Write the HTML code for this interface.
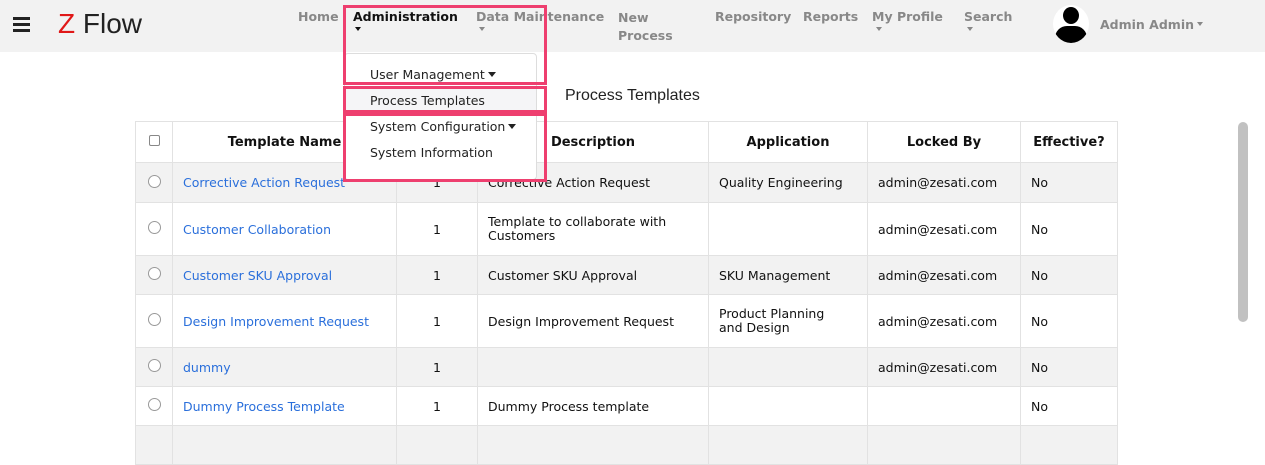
<!DOCTYPE html>
<html><head><style>
*{box-sizing:border-box;margin:0;padding:0}
body{width:1265px;height:429px;overflow:hidden;background:#fff;font-family:"DejaVu Sans","Liberation Sans",sans-serif;position:relative;color:#111}
.hdr{position:absolute;left:0;top:0;width:1265px;height:52px;background:#f2f2f2}
.nav{position:absolute;font-size:12.5px;font-weight:bold;color:#888;top:9px}
.car{position:absolute;width:0;height:0;border-left:3px solid transparent;border-right:3px solid transparent;border-top:4px solid #888}
table{position:absolute;left:135px;top:121px;border-collapse:collapse;font-size:12.5px}
td,th{border:1px solid #e2e2e2;padding:0 10px;vertical-align:middle}
th{font-weight:bold;font-size:13px;text-align:center;height:41px}
tr.s td{background:#f2f2f2}
a{color:#2a6fdb;text-decoration:none}
.rad{display:inline-block;width:13px;height:13px;border:1px solid #999;border-radius:50%;background:#fff}
.pink{position:absolute;border:3px solid #ee3f6f}
.dd{position:absolute;left:344px;top:53px;width:193px;height:127px;background:#fff;border:1px solid #ddd;border-radius:4px}
.di{position:absolute;left:370px;font-size:12.5px;color:#222}
</style></head><body>
<div class="hdr">
<div style="position:absolute;left:13px;top:17px;width:17px;height:3px;background:#222;box-shadow:0 6px 0 #222,0 12px 0 #222"></div>
<div style="position:absolute;left:58px;top:8px;font-family:'Liberation Sans',sans-serif;font-size:28px;color:#222"><span style="color:#e01818">Z</span> Flow</div>
<div class="nav" style="left:298px">Home</div>
<div class="nav" style="left:353px;color:#111">Administration</div><div class="car" style="left:355px;top:27px;border-top-color:#111"></div>
<div class="nav" style="left:476px">Data Maintenance</div><div class="car" style="left:479px;top:27px"></div>
<div class="nav" style="left:618px;line-height:18px">New<br>Process</div>
<div class="nav" style="left:715px">Repository</div>
<div class="nav" style="left:803px">Reports</div>
<div class="nav" style="left:872px">My Profile</div><div class="car" style="left:876px;top:27px"></div>
<div class="nav" style="left:964px">Search</div><div class="car" style="left:967px;top:27px"></div>
<div style="position:absolute;left:1053px;top:5px;width:36px;height:38px;border-radius:50%;background:#fff;overflow:hidden">
<div style="position:absolute;left:10px;top:2px;width:16px;height:17px;border-radius:50%;background:#000"></div>
<div style="position:absolute;left:2px;top:21px;width:32px;height:20px;border-radius:12px 12px 8px 8px;background:#000"></div></div>
<div class="nav" style="left:1100px;top:17px">Admin Admin</div><div class="car" style="left:1197px;top:22px"></div>
</div>
<div style="position:absolute;left:565px;top:87px;font-family:'Liberation Sans',sans-serif;font-size:16px;color:#222">Process Templates</div>
<table>
<tr><th style="width:37px"><span style="display:inline-block;width:11px;height:11px;border:1px solid #888;border-radius:2px"></span></th><th style="width:224px">Template Name</th><th style="width:81px"></th><th style="width:231px">Description</th><th style="width:159px">Application</th><th style="width:153px">Locked By</th><th style="width:97px">Effective?</th></tr>
<tr class="s" style="height:40px"><td style="text-align:center"><span class="rad"></span></td><td><a>Corrective Action Request</a></td><td style="text-align:center">1</td><td>Corrective Action Request</td><td>Quality Engineering</td><td>admin@zesati.com</td><td>No</td></tr>
<tr style="height:53px"><td style="text-align:center"><span class="rad"></span></td><td><a>Customer Collaboration</a></td><td style="text-align:center">1</td><td style="line-height:14px">Template to collaborate with Customers</td><td></td><td>admin@zesati.com</td><td>No</td></tr>
<tr class="s" style="height:39px"><td style="text-align:center"><span class="rad"></span></td><td><a>Customer SKU Approval</a></td><td style="text-align:center">1</td><td>Customer SKU Approval</td><td>SKU Management</td><td>admin@zesati.com</td><td>No</td></tr>
<tr style="height:53px"><td style="text-align:center"><span class="rad"></span></td><td><a>Design Improvement Request</a></td><td style="text-align:center">1</td><td>Design Improvement Request</td><td style="line-height:14px">Product Planning<br>and Design</td><td>admin@zesati.com</td><td>No</td></tr>
<tr class="s" style="height:39px"><td style="text-align:center"><span class="rad"></span></td><td><a>dummy</a></td><td style="text-align:center">1</td><td></td><td></td><td>admin@zesati.com</td><td>No</td></tr>
<tr style="height:39px"><td style="text-align:center"><span class="rad"></span></td><td><a>Dummy Process Template</a></td><td style="text-align:center">1</td><td>Dummy Process template</td><td></td><td></td><td>No</td></tr>
<tr class="s" style="height:39px"><td></td><td></td><td></td><td></td><td></td><td></td><td></td></tr>
</table>
<div style="position:absolute;left:1238px;top:122px;width:10px;height:200px;border-radius:5px;background:#c1c1c1"></div>
<div class="dd"></div>
<div style="position:absolute;left:345px;top:88px;width:191px;height:23px;background:#f5f5f7"></div>
<div class="di" style="top:67px">User Management<span style="display:inline-block;margin-left:3px;border-left:4px solid transparent;border-right:4px solid transparent;border-top:5px solid #222;vertical-align:2px"></span></div>
<div class="di" style="top:93px">Process Templates</div>
<div class="di" style="top:119px">System Configuration<span style="display:inline-block;margin-left:3px;border-left:4px solid transparent;border-right:4px solid transparent;border-top:5px solid #222;vertical-align:2px"></span></div>
<div class="di" style="top:145px">System Information</div>
<div class="pink" style="left:343px;top:5px;width:204px;height:80px"></div>
<div class="pink" style="left:343px;top:86px;width:204px;height:27px"></div>
<div class="pink" style="left:343px;top:113px;width:204px;height:69px"></div>
</body></html>
